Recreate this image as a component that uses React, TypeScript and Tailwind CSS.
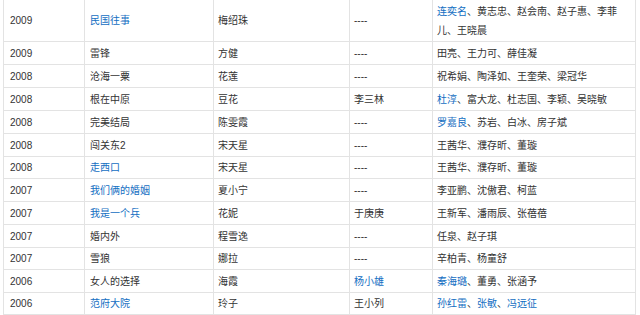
type Seg = { t: string; link?: boolean };

interface Row {
  year: string;
  title: string;
  titleLink?: boolean;
  role: string;
  director: string;
  directorLink?: boolean;
  cast: Seg[][];
  h: string;
}

const rows: Row[] = [
  {
    year: '2009',
    title: '民国往事',
    titleLink: true,
    role: '梅绍珠',
    director: '----',
    cast: [
      [{ t: '连奕名', link: true }, { t: '、黄志忠、赵会南、赵子惠、李菲' }],
      [{ t: '儿、王晓晨' }],
    ],
    h: 'h-[42px]',
  },
  { year: '2009', title: '雷锋', role: '方健', director: '----', cast: [[{ t: '田亮、王力可、薛佳凝' }]], h: 'h-[23px]' },
  { year: '2008', title: '沧海一粟', role: '花莲', director: '----', cast: [[{ t: '祝希娟、陶泽如、王奎荣、梁冠华' }]], h: 'h-[23px]' },
  {
    year: '2008',
    title: '根在中原',
    role: '豆花',
    director: '李三林',
    cast: [[{ t: '杜淳', link: true }, { t: '、富大龙、杜志国、李颖、吴晓敏' }]],
    h: 'h-[23px]',
  },
  {
    year: '2008',
    title: '完美结局',
    role: '陈雯霞',
    director: '----',
    cast: [[{ t: '罗嘉良', link: true }, { t: '、苏岩、白冰、房子斌' }]],
    h: 'h-[23px]',
  },
  { year: '2008', title: '闯关东2', role: '宋天星', director: '----', cast: [[{ t: '王茜华、濮存昕、董璇' }]], h: 'h-[23px]' },
  { year: '2008', title: '走西口', titleLink: true, role: '宋天星', director: '----', cast: [[{ t: '王茜华、濮存昕、董璇' }]], h: 'h-[22px]' },
  { year: '2007', title: '我们俩的婚姻', titleLink: true, role: '夏小宁', director: '----', cast: [[{ t: '李亚鹏、沈傲君、柯蓝' }]], h: 'h-[23px]' },
  { year: '2007', title: '我是一个兵', titleLink: true, role: '花妮', director: '于庚庚', cast: [[{ t: '王新军、潘雨辰、张蓓蓓' }]], h: 'h-[23px]' },
  { year: '2007', title: '婚内外', role: '程雪逸', director: '----', cast: [[{ t: '任泉、赵子琪' }]], h: 'h-[23px]' },
  { year: '2007', title: '雪狼', role: '娜拉', director: '----', cast: [[{ t: '辛柏青、杨童舒' }]], h: 'h-[22px]' },
  {
    year: '2006',
    title: '女人的选择',
    role: '海霞',
    director: '杨小雄',
    directorLink: true,
    cast: [[{ t: '秦海璐', link: true }, { t: '、董勇、张涵予' }]],
    h: 'h-[23px]',
  },
  {
    year: '2006',
    title: '范府大院',
    titleLink: true,
    role: '玲子',
    director: '王小列',
    cast: [[{ t: '孙红雷', link: true }, { t: '、' }, { t: '张敏', link: true }, { t: '、' }, { t: '冯远征', link: true }]],
    h: 'h-[22px]',
  },
];

const link = 'text-[#136ec2]';

export default function App() {
  return (
    <div className="w-[640px] h-[315px] overflow-hidden bg-white pl-[3px] font-['Liberation_Sans','Noto_Sans_CJK_SC',sans-serif] text-[10px] text-[#333]">
      <div className="w-[633px] border-l border-[#e3e3e3]">
        {rows.map((r, i) => (
          <div key={i} className={`flex border-b border-[#e3e3e3] ${r.h}`}>
            <div className="w-[81px] shrink-0 flex items-center border-r border-[#e3e3e3] pl-[6px]">{r.year}</div>
            <div className={`w-[129px] shrink-0 flex items-center border-r border-[#e3e3e3] pl-[5px] ${r.titleLink ? link : ''}`}>
              {r.title}
            </div>
            <div className="w-[136px] shrink-0 flex items-center border-r border-[#e3e3e3] pl-[4px]">{r.role}</div>
            <div className={`w-[83px] shrink-0 flex items-center border-r border-[#e3e3e3] pl-[4px] ${r.directorLink ? link : ''}`}>
              {r.director}
            </div>
            <div className="w-[203px] shrink-0 flex flex-col justify-center border-r border-[#e3e3e3] pl-[4px] leading-[19px]">
              {r.cast.map((line, j) => (
                <div key={j}>
                  {line.map((s, k) => (
                    <span key={k} className={s.link ? link : ''}>
                      {s.t}
                    </span>
                  ))}
                </div>
              ))}
            </div>
          </div>
        ))}
      </div>
    </div>
  );
}
